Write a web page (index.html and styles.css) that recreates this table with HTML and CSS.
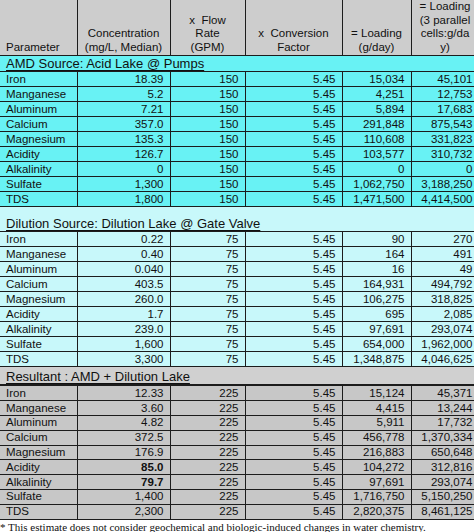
FILE: index.html
```html
<!DOCTYPE html>
<html>
<head>
<meta charset="utf-8">
<link rel="stylesheet" href="styles.css">
</head>
<body>
<div class="page">
<table class="loading">
  <colgroup>
    <col class="c1"><col class="c2"><col class="c3"><col class="c4"><col class="c5"><col class="c6">
  </colgroup>
  <thead>
    <tr class="head">
      <th class="left">Parameter</th>
      <th>Concentration<br>(mg/L, Median)</th>
      <th>x&nbsp;&nbsp;Flow<br>Rate<br>(GPM)</th>
      <th>x&nbsp;&nbsp;Conversion<br>Factor</th>
      <th>= Loading<br>(g/day)</th>
      <th>= Loading<br>(3 parallel<br>cells:g/da<br>y)</th>
    </tr>
  </thead>
  <tbody class="amd">
    <tr class="section"><td colspan="6"><span>AMD Source: Acid Lake @ Pumps</span></td></tr>
    <tr><td>Iron</td><td>18.39</td><td>150</td><td>5.45</td><td>15,034</td><td>45,101</td></tr>
    <tr><td>Manganese</td><td>5.2</td><td>150</td><td>5.45</td><td>4,251</td><td>12,753</td></tr>
    <tr><td>Aluminum</td><td>7.21</td><td>150</td><td>5.45</td><td>5,894</td><td>17,683</td></tr>
    <tr><td>Calcium</td><td>357.0</td><td>150</td><td>5.45</td><td>291,848</td><td>875,543</td></tr>
    <tr><td>Magnesium</td><td>135.3</td><td>150</td><td>5.45</td><td>110,608</td><td>331,823</td></tr>
    <tr><td>Acidity</td><td>126.7</td><td>150</td><td>5.45</td><td>103,577</td><td>310,732</td></tr>
    <tr><td>Alkalinity</td><td>0</td><td>150</td><td>5.45</td><td>0</td><td>0</td></tr>
    <tr><td>Sulfate</td><td>1,300</td><td>150</td><td>5.45</td><td>1,062,750</td><td>3,188,250</td></tr>
    <tr><td>TDS</td><td>1,800</td><td>150</td><td>5.45</td><td>1,471,500</td><td>4,414,500</td></tr>
  </tbody>
  <tbody class="dil">
    <tr class="section"><td colspan="6"><span>Dilution Source: Dilution Lake @ Gate Valve</span></td></tr>
    <tr><td>Iron</td><td>0.22</td><td>75</td><td>5.45</td><td>90</td><td>270</td></tr>
    <tr><td>Manganese</td><td>0.40</td><td>75</td><td>5.45</td><td>164</td><td>491</td></tr>
    <tr><td>Aluminum</td><td>0.040</td><td>75</td><td>5.45</td><td>16</td><td>49</td></tr>
    <tr><td>Calcium</td><td>403.5</td><td>75</td><td>5.45</td><td>164,931</td><td>494,792</td></tr>
    <tr><td>Magnesium</td><td>260.0</td><td>75</td><td>5.45</td><td>106,275</td><td>318,825</td></tr>
    <tr><td>Acidity</td><td>1.7</td><td>75</td><td>5.45</td><td>695</td><td>2,085</td></tr>
    <tr><td>Alkalinity</td><td>239.0</td><td>75</td><td>5.45</td><td>97,691</td><td>293,074</td></tr>
    <tr><td>Sulfate</td><td>1,600</td><td>75</td><td>5.45</td><td>654,000</td><td>1,962,000</td></tr>
    <tr><td>TDS</td><td>3,300</td><td>75</td><td>5.45</td><td>1,348,875</td><td>4,046,625</td></tr>
  </tbody>
  <tbody class="res">
    <tr class="section"><td colspan="6"><span>Resultant : AMD + Dilution Lake</span></td></tr>
    <tr><td>Iron</td><td>12.33</td><td>225</td><td>5.45</td><td>15,124</td><td>45,371</td></tr>
    <tr><td>Manganese</td><td>3.60</td><td>225</td><td>5.45</td><td>4,415</td><td>13,244</td></tr>
    <tr><td>Aluminum</td><td>4.82</td><td>225</td><td>5.45</td><td>5,911</td><td>17,732</td></tr>
    <tr><td>Calcium</td><td>372.5</td><td>225</td><td>5.45</td><td>456,778</td><td>1,370,334</td></tr>
    <tr><td>Magnesium</td><td>176.9</td><td>225</td><td>5.45</td><td>216,883</td><td>650,648</td></tr>
    <tr><td>Acidity</td><td class="bold">85.0</td><td>225</td><td>5.45</td><td>104,272</td><td>312,816</td></tr>
    <tr><td>Alkalinity</td><td class="bold">79.7</td><td>225</td><td>5.45</td><td>97,691</td><td>293,074</td></tr>
    <tr><td>Sulfate</td><td>1,400</td><td>225</td><td>5.45</td><td>1,716,750</td><td>5,150,250</td></tr>
    <tr><td>TDS</td><td>2,300</td><td>225</td><td>5.45</td><td>2,820,375</td><td>8,461,125</td></tr>
  </tbody>
</table>
<p class="note">* This estimate does not consider geochemical and biologic-induced changes in water chemistry.</p>
</div>
</body>
</html>
```
FILE: styles.css
```css
html, body {
  margin: 0;
  padding: 0;
  overflow: hidden;
  background: #ffffff;
}
.page {
  width: 480px;
}
.loading {
  border-collapse: collapse;
  table-layout: fixed;
  width: 479px;
  font-family: "Liberation Sans", Arial, Helvetica, sans-serif;
  font-size: 11.5px;
  color: #111;
}
.c1 { width: 77px; }
.c2 { width: 93px; }
.c3 { width: 75px; }
.c4 { width: 97px; }
.c5 { width: 69px; }
.c6 { width: 68px; }

.head th {
  height: 53px;
  padding: 0 1px 1px;
  vertical-align: bottom;
  font-weight: normal;
  font-size: 11.5px;
  line-height: 13.6px;
  text-align: center;
  background: #cdcdcd;
  border: 1px solid #1c1c1c;
  border-top: none;
  overflow: hidden;
  white-space: nowrap;
}
.head th.left {
  text-align: left;
  padding-left: 6px;
  border-left: none;
}
td {
  height: 14px;
  padding: 0 6px 0 0;
  text-align: right;
  border: 1px solid #1c1c1c;
  line-height: 13px;
  white-space: nowrap;
}
td:first-child {
  text-align: left;
  padding-left: 6px;
  border-left: none;
}
.bold { font-weight: bold; }

.section td {
  text-align: left;
  padding-left: 6px;
  font-size: 13px;
  border-left: none;
  border-right: none;
  vertical-align: bottom;
  line-height: 15px;
}
.section span {
  text-decoration: underline;
  text-underline-offset: 2px;
}
.amd td { background: #68f2f4; }
.amd .section td { height: 15px; }
.dil td { background: #c8f8fa; }
.dil .section td { height: 24px; border-top: none; }
.res td { background: #c7c7c7; height: 13.8px; }
.res .section td {
  height: 17px;
  background: #d0d0d0;
  border-bottom: 2px solid #1c1c1c;
}
.note {
  margin: 0;
  padding-top: 1px;
  font-family: "Liberation Serif", "Times New Roman", serif;
  font-size: 11px;
  line-height: 13px;
  color: #111;
  white-space: nowrap;
}
```
